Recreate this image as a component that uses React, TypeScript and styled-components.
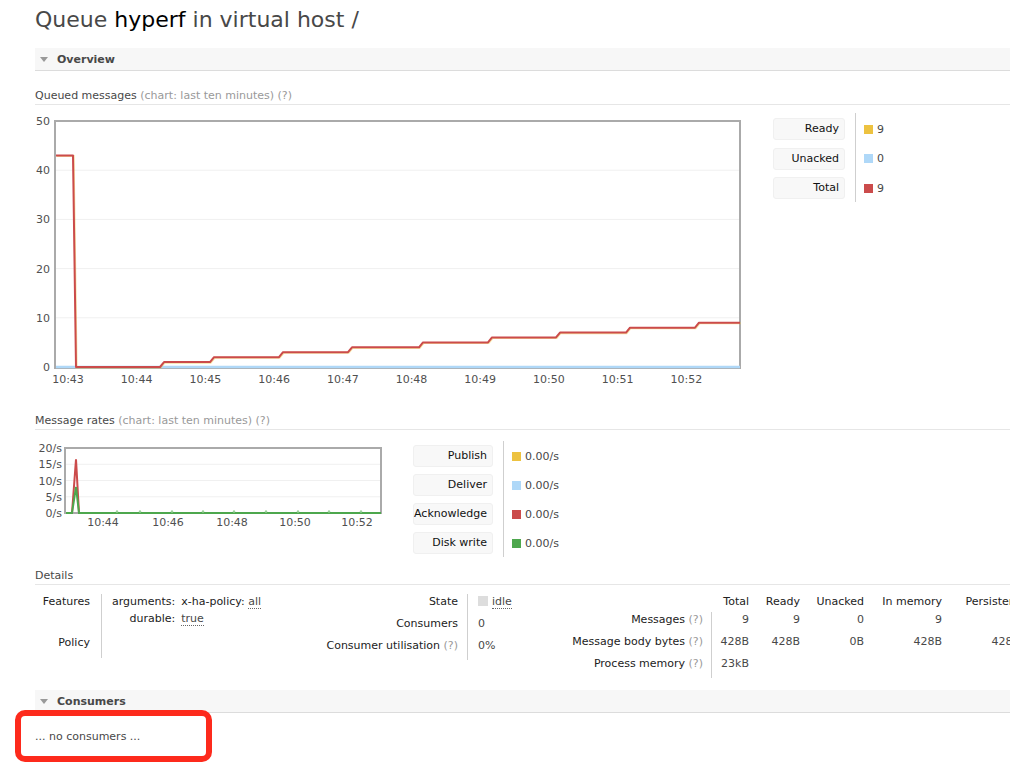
import React from "react";
import styled, { createGlobalStyle } from "styled-components";

const GlobalStyle = createGlobalStyle`
  html, body {
    margin: 0;
    padding: 0;
    background: #fff;
    overflow: hidden;
  }
  body {
    font-family: "DejaVu Sans", Verdana, sans-serif;
    font-size: 11px;
    color: #484848;
  }
`;

const Page = styled.div`
  position: relative;
  width: 1010px;
  height: 768px;
  overflow: hidden;
`;

const Main = styled.div`
  width: 1000px;
  padding-left: 35px;
`;

const Title = styled.h1`
  margin: 0;
  padding-top: 8px;
  font-size: 22px;
  line-height: 24px;
  font-weight: normal;
  color: #484848;
  b {
    font-weight: normal;
    color: #000;
  }
`;

const SectionBar = styled.div<{ $top: number }>`
  margin-top: ${(p) => p.$top}px;
  height: 22px;
  display: flex;
  align-items: center;
  padding-left: 5px;
  background: #f7f7f7;
  border-bottom: 1px solid #dcdcdc;
  font-weight: bold;
  color: #484848;
`;

const Arrow = styled.span`
  width: 0;
  height: 0;
  border-left: 4.5px solid transparent;
  border-right: 4.5px solid transparent;
  border-top: 5px solid #999;
  margin-right: 9px;
`;

const SubHead = styled.h3<{ $top: number }>`
  margin: ${(p) => p.$top}px 0 0;
  font-size: 11px;
  font-weight: normal;
  line-height: 14px;
  padding-bottom: 1px;
  border-bottom: 1px solid #e6e6e6;
  color: #484848;
`;

const Muted = styled.span`
  color: #999;
`;

const ChartRow = styled.div<{ $top: number }>`
  display: flex;
  align-items: flex-start;
  margin-top: ${(p) => p.$top}px;
`;

const ChartSvg = styled.svg`
  display: block;
  flex: none;
  text {
    font-family: "DejaVu Sans", Verdana, sans-serif;
    font-size: 11px;
    fill: #505050;
  }
`;

const Legend = styled.div<{ $label: number }>`
  display: grid;
  grid-template-columns: ${(p) => p.$label}px auto;
  margin-left: 28px;
`;

const LegendKey = styled.div<{ $pt: number; $pb: number }>`
  padding: ${(p) => p.$pt}px 10px ${(p) => p.$pb}px 0;
`;

const LegendBox = styled.div`
  box-sizing: border-box;
  height: 22px;
  line-height: 20px;
  padding-right: 5px;
  text-align: right;
  color: #111;
  background: #f8f8f8;
  border: 1px solid #f0f0f0;
  border-radius: 3px;
`;

const LegendValue = styled.div<{ $pt: number; $pb: number }>`
  display: flex;
  align-items: center;
  border-left: 1px solid #cfcfcf;
  padding: ${(p) => p.$pt}px 0 ${(p) => p.$pb}px 8px;
  height: 22px;
`;

const Swatch = styled.span<{ $color: string }>`
  width: 9px;
  height: 9px;
  background: ${(p) => p.$color};
  margin-right: 4px;
`;

const DetailsRow = styled.div`
  display: flex;
  align-items: flex-start;
  margin-top: 9px;
`;

const Facts = styled.div<{ $cols: string; $width?: number }>`
  display: grid;
  grid-template-columns: ${(p) => p.$cols};
  ${(p) => (p.$width ? `width: ${p.$width}px;` : "")}
  flex: none;
  line-height: 16px;
`;

const Th = styled.div<{ $pb: number; $pr: number }>`
  text-align: right;
  color: #222;
  padding: 0 ${(p) => p.$pr}px ${(p) => p.$pb}px 0;
`;

const Td = styled.div<{ $pb: number }>`
  border-left: 1px solid #cfcfcf;
  padding: 0 0 ${(p) => p.$pb}px 10px;
`;

const Num = styled.div<{ $pb: number; $sep?: boolean }>`
  text-align: right;
  padding-bottom: ${(p) => p.$pb}px;
  ${(p) => (p.$sep ? "border-left: 1px solid #cfcfcf;" : "")}
`;

const ColHead = styled.div`
  text-align: right;
  color: #222;
  padding-bottom: 2px;
`;

const KeyGrid = styled.div`
  display: grid;
  grid-template-columns: auto auto;
  justify-content: start;
  column-gap: 6px;
  row-gap: 1px;
  color: #222;
`;

const Key = styled.span`
  text-align: right;
`;

const Abbr = styled.span`
  border-bottom: 1px dotted #666;
  color: #484848;
`;

const StateBox = styled.span`
  display: inline-block;
  width: 10px;
  height: 10px;
  background: #ddd;
  margin-right: 4px;
  vertical-align: -1px;
`;

const Empty = styled.p`
  margin: 17px 0 0;
  line-height: 14px;
  color: #484848;
`;

const Annotation = styled.div`
  position: absolute;
  left: 15px;
  top: 710px;
  width: 197px;
  height: 52px;
  box-sizing: border-box;
  border: 6px solid #fd2a1c;
  border-radius: 10px;
`;

const YELLOW = "#edc240";
const BLUE = "#afd8f8";
const RED = "#cb4b4b";
const GREEN = "#4da74d";

/* ---------- queued messages chart ---------- */

const QueuedChart = () => {
  const ox = 35;
  const yv = (v: number) => 254 - v * 4.92;
  const left = 20;
  const right = 705;
  const steps = [160, 210, 279, 348, 419, 488, 556, 626, 695];
  const pts: [number, number][] = [
    [56 - ox, yv(43)],
    [73 - ox, yv(43)],
    [76 - ox, yv(0)],
  ];
  steps.forEach((x, i) => {
    pts.push([x - ox, yv(i)]);
    pts.push([x + 4 - ox, yv(i + 1)]);
  });
  pts.push([right, yv(9)]);
  const line = pts.map((p) => p.join(",")).join(" ");
  const ticks = ["10:43", "10:44", "10:45", "10:46", "10:47", "10:48", "10:49", "10:50", "10:51", "10:52"];
  return (
    <ChartSvg width={710} height={274}>
      {[10, 20, 30, 40].map((v) => (
        <line key={v} x1={left} x2={right} y1={yv(v)} y2={yv(v)} stroke="#f0f0f0" strokeWidth={1} />
      ))}
      <rect x={left} y={8} width={right - left} height={247} fill="none" stroke="#aaa" strokeWidth={2} />
      {[0, 10, 20, 30, 40, 50].map((v) => (
        <text key={v} x={15} y={yv(v) + 4} textAnchor="end">
          {v}
        </text>
      ))}
      {ticks.map((t, i) => (
        <text key={t} x={33 + i * 68.7} y={270} textAnchor="middle">
          {t}
        </text>
      ))}
      <line x1={left + 1} x2={right} y1={yv(0)} y2={yv(0)} stroke={BLUE} strokeWidth={2.5} />
      <polyline points={line} fill="none" stroke={YELLOW} strokeWidth={2} strokeOpacity={0.5} transform="translate(0.6,0.6)" />
      <polyline points={line} fill="none" stroke={RED} strokeWidth={2} strokeLinejoin="round" />
    </ChartSvg>
  );
};

/* ---------- message rates chart ---------- */

const RatesChart = () => {
  const yv = (v: number) => 72 - v * 3.25;
  const left = 30;
  const right = 346;
  const ticks = ["10:44", "10:46", "10:48", "10:50", "10:52"];
  const tickX = [68, 133, 197, 260, 322];
  const spike = (peak: number) =>
    [
      [left + 1, yv(0)],
      [37, yv(0)],
      [41, yv(peak)],
      [44, yv(0)],
      [right, yv(0)],
    ]
      .map((p) => p.join(","))
      .join(" ");
  const dots = [82, 105, 137, 168, 199, 231, 263, 294, 326];
  return (
    <ChartSvg width={350} height={90}>
      {[5, 10, 15].map((v) => (
        <line key={v} x1={left} x2={right} y1={yv(v)} y2={yv(v)} stroke="#f0f0f0" strokeWidth={1} />
      ))}
      <rect x={left} y={7} width={right - left} height={65} fill="none" stroke="#aaa" strokeWidth={2} />
      {["0/s", "5/s", "10/s", "15/s", "20/s"].map((t, i) => (
        <text key={t} x={27} y={yv(i * 5) + 4} textAnchor="end">
          {t}
        </text>
      ))}
      {ticks.map((t, i) => (
        <text key={t} x={tickX[i]} y={85} textAnchor="middle">
          {t}
        </text>
      ))}
      <polyline points={spike(16.5)} fill="none" stroke={RED} strokeWidth={2} />
      <polyline points={spike(8)} fill="none" stroke={GREEN} strokeWidth={2} />
      {dots.map((x) => (
        <circle key={x} cx={x} cy={yv(0) - 1.5} r={1.2} fill="#9ed29e" />
      ))}
    </ChartSvg>
  );
};

/* ---------- legends ---------- */

type LegendItem = { label: string; color: string; value: string };

const ChartLegend = ({ items, width, pt, pb }: { items: LegendItem[]; width: number; pt: number; pb: number }) => (
  <Legend $label={width + 10}>
    {items.map((it) => (
      <React.Fragment key={it.label}>
        <LegendKey $pt={pt} $pb={pb}>
          <LegendBox>{it.label}</LegendBox>
        </LegendKey>
        <LegendValue $pt={pt} $pb={pb}>
          <Swatch $color={it.color} />
          {it.value}
        </LegendValue>
      </React.Fragment>
    ))}
  </Legend>
);

const queuedLegend: LegendItem[] = [
  { label: "Ready", color: YELLOW, value: "9" },
  { label: "Unacked", color: BLUE, value: "0" },
  { label: "Total", color: RED, value: "9" },
];

const ratesLegend: LegendItem[] = [
  { label: "Publish", color: YELLOW, value: "0.00/s" },
  { label: "Deliver", color: BLUE, value: "0.00/s" },
  { label: "Acknowledge", color: RED, value: "0.00/s" },
  { label: "Disk write", color: GREEN, value: "0.00/s" },
];

const statRows = [
  { label: "Messages", values: ["9", "9", "0", "9", "9"] },
  { label: "Message body bytes", values: ["428B", "428B", "0B", "428B", "428B"] },
  { label: "Process memory", values: ["23kB", "", "", "", ""] },
];

const statHeads = ["Total", "Ready", "Unacked", "In memory", "Persistent"];

export default function App() {
  return (
    <Page>
      <GlobalStyle />
      <Main>
        <Title>
          Queue <b>hyperf</b> in virtual host /
        </Title>

        <SectionBar $top={16}>
          <Arrow />
          Overview
        </SectionBar>

        <SubHead $top={18}>
          Queued messages <Muted>(chart: last ten minutes) (?)</Muted>
        </SubHead>
        <ChartRow $top={8}>
          <QueuedChart />
          <ChartLegend items={queuedLegend} width={72} pt={5} pb={2.5} />
        </ChartRow>

        <SubHead $top={27}>
          Message rates <Muted>(chart: last ten minutes) (?)</Muted>
        </SubHead>
        <ChartRow $top={11}>
          <RatesChart />
          <ChartLegend items={ratesLegend} width={80} pt={4} pb={3} />
        </ChartRow>

        <SubHead $top={12}>Details</SubHead>
        <DetailsRow>
          <Facts $cols="66px auto" $width={285}>
            <Th $pr={11} $pb={8}>Features</Th>
            <Td $pb={8}>
              <KeyGrid>
                <Key>arguments:</Key>
                <span>
                  x-ha-policy: <Abbr>all</Abbr>
                </span>
                <Key>durable:</Key>
                <span>
                  <Abbr>true</Abbr>
                </span>
              </KeyGrid>
            </Td>
            <Th $pr={11} $pb={7}>Policy</Th>
            <Td $pb={7} />
          </Facts>

          <Facts $cols="147px 95px">
            <Th $pr={9} $pb={6}>State</Th>
            <Td $pb={6}>
              <StateBox />
              <Abbr>idle</Abbr>
            </Td>
            <Th $pr={9} $pb={6}>Consumers</Th>
            <Td $pb={6}>0</Td>
            <Th $pr={9} $pb={6}>
              Consumer utilisation <Muted>(?)</Muted>
            </Th>
            <Td $pb={6}>0%</Td>
          </Facts>

          <Facts $cols="149px 38px 51px 64px 78px 78px">
            <div />
            {statHeads.map((h) => (
              <ColHead key={h}>{h}</ColHead>
            ))}
            {statRows.map((r) => (
              <React.Fragment key={r.label}>
                <Th $pr={8} $pb={6}>
                  {r.label} <Muted>(?)</Muted>
                </Th>
                {r.values.map((v, i) => (
                  <Num key={i} $pb={6} $sep={i === 0}>
                    {v}
                  </Num>
                ))}
              </React.Fragment>
            ))}
          </Facts>
        </DetailsRow>

        <SectionBar $top={12}>
          <Arrow />
          Consumers
        </SectionBar>
        <Empty>... no consumers ...</Empty>
      </Main>
      <Annotation />
    </Page>
  );
}
